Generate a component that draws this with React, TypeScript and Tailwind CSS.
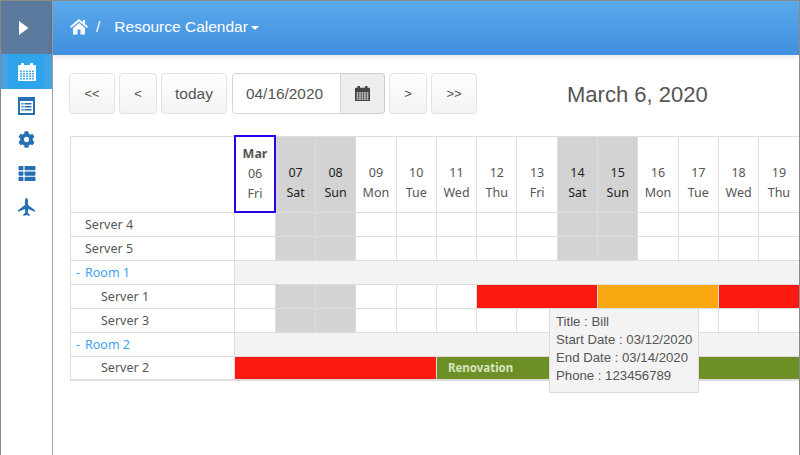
import { FaCog, FaThList } from "react-icons/fa";

const days = [
  { d: "07", w: "Sat", off: true },
  { d: "08", w: "Sun", off: true },
  { d: "09", w: "Mon" },
  { d: "10", w: "Tue" },
  { d: "11", w: "Wed" },
  { d: "12", w: "Thu" },
  { d: "13", w: "Fri" },
  { d: "14", w: "Sat", off: true },
  { d: "15", w: "Sun", off: true },
  { d: "16", w: "Mon" },
  { d: "17", w: "Tue" },
  { d: "18", w: "Wed" },
  { d: "19", w: "Thu" },
];

const offFlags = [false, ...days.map((d) => !!d.off)];
const cellClass = "border border-[#ddd] h-6 p-0";
const labelClass = "border border-[#ddd] h-6 p-0 pt-[2px] text-left text-[12.5px]";
const navBtn =
  "h-[41px] rounded border border-[#e3e3e3] bg-gradient-to-b from-white to-[#f3f3f3] text-[#555]";

function CalendarIcon({ fill, hole, size }: { fill: string; hole: string; size: number }) {
  const dots = [];
  for (let r = 0; r < 4; r++) {
    for (let c = 0; c < 5; c++) {
      dots.push(<rect key={`${r}-${c}`} x={2 + c * 3} y={7.5 + r * 2.5} width="2" height="1.6" fill={hole} />);
    }
  }
  return (
    <svg width={size} height={size} viewBox="0 0 18 18">
      <path
        d="M3 0h3v2h6V0h3v2h2a1 1 0 0 1 1 1v14a1 1 0 0 1-1 1H1a1 1 0 0 1-1-1V3a1 1 0 0 1 1-1h2z"
        fill={fill}
      />
      {dots}
    </svg>
  );
}

function ListAltIcon() {
  return (
    <svg width="17" height="18" viewBox="0 0 17 18">
      <path
        fillRule="evenodd"
        d="M0 0h17v18H0zM2 4v12h13V4z"
        fill="#2470b3"
      />
      <path d="M3.5 6h2v1.6h-2zM6.5 6h7v1.6h-7zM3.5 9h2v1.6h-2zM6.5 9h7v1.6h-7zM3.5 12h2v1.6h-2zM6.5 12h7v1.6h-7z" fill="#2470b3" />
    </svg>
  );
}

function PlaneIcon() {
  return (
    <svg width="17" height="18" viewBox="0 0 16 17">
      <path
        d="M8 0C9 0 9.5 2 9.5 4V6.5L16 11.5V13L9.5 10.5L9.2 14L11 15.5V17L8 16L5 17V15.5L6.8 14L6.5 10.5L0 13V11.5L6.5 6.5V4C6.5 2 7 0 8 0Z"
        fill="#2470b3"
      />
    </svg>
  );
}

function HomeIcon() {
  return (
    <svg width="18" height="17" viewBox="0 0 18 17" className="-mt-[2px]">
      <path d="M9 1L0 8.5L1 10L9 3.5L17 10L18 8.5L15 6V2H13V4.2Z" fill="#fff" />
      <path d="M9 5L3 10V16.5H7.5V11.5H10.5V16.5H15V10Z" fill="#fff" />
    </svg>
  );
}

function EmptyCells() {
  return (
    <>
      {offFlags.map((off, i) => (
        <td key={i} className={`${cellClass} ${off ? "bg-[#d3d3d3]" : ""}`} />
      ))}
    </>
  );
}

function RoomRow({ name }: { name: string }) {
  return (
    <tr>
      <td className={`${labelClass} pl-[5px] text-[#3f9fee]`}>
        -<span className="ml-[5px]">{name}</span>
      </td>
      <td colSpan={14} className={`${cellClass} bg-[#f3f3f3]`} />
    </tr>
  );
}

export default function App() {
  return (
    <div className="relative flex h-[455px] w-[800px] overflow-hidden border-x border-t border-[#8a8a8a] bg-white font-['Liberation_Sans',sans-serif]">
      <aside className="flex w-[52px] shrink-0 flex-col items-stretch border-r border-[#a0a0a0]">
        <div className="flex h-[53px] items-center justify-center bg-[#5b7a9d] pr-[6px]">
          <svg width="10" height="14" viewBox="0 0 10 14">
            <polygon points="0,0 9.5,7 0,14" fill="#fff" />
          </svg>
        </div>
        <div className="flex h-[35px] bg-[#45a2e6] px-[7px]">
          <div className="flex flex-1 items-center justify-center bg-[#2ea5ea]">
            <CalendarIcon fill="#fff" hole="#4cb0ec" size={18} />
          </div>
        </div>
        <div className="flex h-[34px] items-center justify-center">
          <ListAltIcon />
        </div>
        <div className="flex h-[33px] items-center justify-center text-[#2470b3]">
          <FaCog className="h-[17px] w-[17px]" />
        </div>
        <div className="flex h-[34px] items-center justify-center text-[#2470b3]">
          <FaThList className="h-[17px] w-[18px]" />
        </div>
        <div className="flex h-[33px] items-center justify-center">
          <PlaneIcon />
        </div>
      </aside>

      <main className="min-w-0 flex-1">
        <header className="flex h-[54px] items-center bg-gradient-to-b from-[#5aa9ea] to-[#3f8fdf] pb-[2px] pl-[17px] text-white shadow-[0_2px_6px_rgba(0,0,0,0.12)]">
          <HomeIcon />
          <span className="ml-[8px] text-[15.5px]">/</span>
          <span className="ml-[14px] text-[15.5px]">Resource Calendar</span>
          <span className="ml-[3px] mt-[2px] border-x-[4.5px] border-t-[4.5px] border-x-transparent border-t-white" />
        </header>

        <div className="flex items-center pl-[16px] pt-[18px]">
          <button className={`${navBtn} w-[46px] text-[13px]`}>&lt;&lt;</button>
          <button className={`${navBtn} ml-[4px] w-[38px] text-[13px]`}>&lt;</button>
          <button className={`${navBtn} ml-[4px] w-[66px] text-[15.5px]`}>today</button>
          <div className="ml-[5px] flex h-[41px] w-[153px]">
            <div className="flex flex-1 items-center rounded-l border border-[#d5d5d5] pl-[13px] pt-[1px] text-[15.4px] text-[#555]">
              04/16/2020
            </div>
            <div className="flex w-[44px] items-center justify-center rounded-r border border-l-0 border-[#ccc] bg-[#eee]">
              <CalendarIcon fill="#444" hole="#eee" size={15} />
            </div>
          </div>
          <button className={`${navBtn} ml-[4px] w-[38px] text-[13px]`}>&gt;</button>
          <button className={`${navBtn} ml-[4px] w-[46px] text-[13px]`}>&gt;&gt;</button>
          <h2 className="ml-[90px] pt-[1px] text-[22px] font-normal text-[#555]">March 6, 2020</h2>
        </div>

        <div className="ml-[17px] mt-[21px] overflow-hidden">
          <table className="w-[728.6px] table-fixed border-collapse border-b-2 border-[#ddd] font-['Noto_Sans',sans-serif]">
            <colgroup>
              <col className="w-[164.4px]" />
              {offFlags.map((_, i) => (
                <col key={i} className="w-[40.3px]" />
              ))}
            </colgroup>
            <thead>
              <tr className="h-[76px] text-center text-[12.5px] leading-[20px] text-[#555]">
                <th className="border border-[#ddd]" />
                <th className="border-2 border-[#2a00e6] p-0 font-normal">
                  <div className="font-bold">Mar</div>
                  <div>06</div>
                  <div>Fri</div>
                </th>
                {days.map((d) => (
                  <th
                    key={d.d}
                    className={`border border-[#ddd] p-0 pt-[18px] font-normal ${d.off ? "bg-[#d3d3d3] text-[#222]" : ""}`}
                  >
                    <div>{d.d}</div>
                    <div>{d.w}</div>
                  </th>
                ))}
              </tr>
            </thead>
            <tbody>
              <tr>
                <td className={`${labelClass} pl-[14px] text-[#555]`}>Server 4</td>
                <EmptyCells />
              </tr>
              <tr>
                <td className={`${labelClass} pl-[14px] text-[#555]`}>Server 5</td>
                <EmptyCells />
              </tr>
              <RoomRow name="Room 1" />
              <tr>
                <td className={`${labelClass} pl-[30px] text-[#555]`}>Server 1</td>
                {offFlags.slice(0, 6).map((off, i) => (
                  <td key={i} className={`${cellClass} ${off ? "bg-[#d3d3d3]" : ""}`} />
                ))}
                <td colSpan={3} className={`${cellClass} bg-[#fc1a10]`} />
                <td colSpan={3} className={`${cellClass} bg-[#f9a812]`} />
                <td colSpan={2} className={`${cellClass} bg-[#fc1a10]`} />
              </tr>
              <tr>
                <td className={`${labelClass} pl-[30px] text-[#555]`}>Server 3</td>
                <EmptyCells />
              </tr>
              <RoomRow name="Room 2" />
              <tr>
                <td className={`${labelClass} pl-[30px] text-[#555]`}>Server 2</td>
                <td colSpan={5} className={`${cellClass} bg-[#fc1a10]`} />
                <td
                  colSpan={9}
                  className={`${cellClass} bg-[#6c9025] pl-[11px] text-[11.5px] font-bold text-[#d8e4c0]`}
                >
                  Renovation
                </td>
              </tr>
            </tbody>
          </table>
        </div>
      </main>

      {/* tooltip over the bars */}
      <div className="absolute left-[548px] top-[307px] h-[85px] w-[150px] border border-[#ddd] bg-[#f3f3f3] pl-[6px] pt-[4px] text-[13.2px] leading-[18px] text-[#555]">
        <div>Title : Bill</div>
        <div>Start Date : 03/12/2020</div>
        <div>End Date : 03/14/2020</div>
        <div>Phone : 123456789</div>
      </div>
    </div>
  );
}
